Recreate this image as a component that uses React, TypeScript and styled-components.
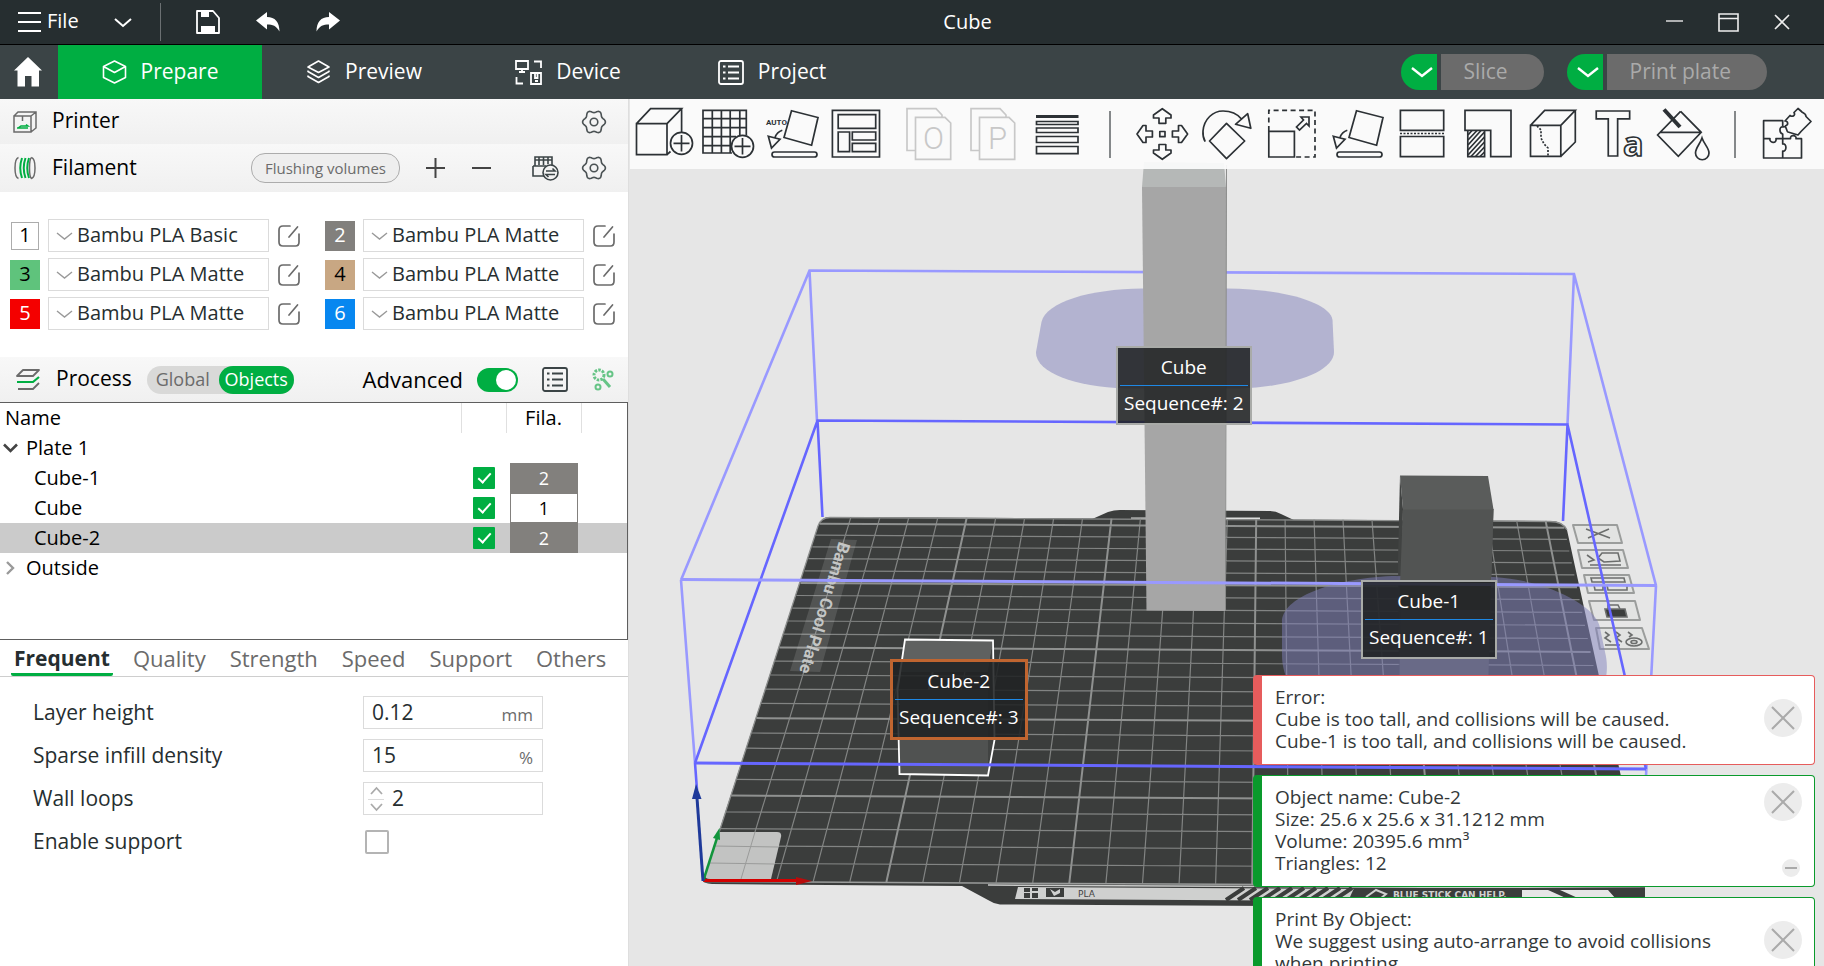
import React, { useId, useState } from 'react';
import styled, { createGlobalStyle, css } from 'styled-components';

const GlobalStyle = createGlobalStyle`
  *, *::before, *::after { box-sizing: border-box; }
  body { margin: 0; }
  body, button, input, select { font-family: "Open Sans", "Noto Sans", sans-serif; }
  button, input, select { margin: 0; padding: 0; border: 0; background: none; color: inherit; font-size: inherit; }
  svg { display: block; flex: none; overflow: visible; }
`;

const green = '#00ae42';

/* ---------- window frame ---------- */

const Window = styled.div`
  display: flex;
  flex-direction: column;
  height: 100vh;
  min-height: 720px;
  overflow: hidden;
  background: #fff;
  color: #000;
`;

const TitleBar = styled.header`
  display: flex;
  flex: none;
  align-items: center;
  height: 45px;
  border-bottom: 1px solid #000;
  background: #262e30;
  color: #fff;
  font-size: 20px;
`;

const FileButton = styled.button`
  display: flex;
  align-items: center;
  gap: 6px;
  width: 93px;
  height: 44px;
  padding-left: 18px;
  line-height: 40px;
`;

const ButtonText = styled.span`
  padding-bottom: 2px;
`;

const TitleButton = styled.button<{ $narrow?: boolean }>`
  display: flex;
  align-items: center;
  justify-content: center;
  width: ${p => (p.$narrow ? 54 : 60)}px;
  height: 44px;
`;

const TitleDivider = styled.span`
  width: 1px;
  height: 38px;
  margin: 0 17px 0 7px;
  background: #6b7072;
`;

const Title = styled.h1`
  flex: 1;
  margin: 0;
  padding: 0 70px 2px 0;
  font-size: 20px;
  font-weight: 400;
  text-align: center;
`;

const WindowControls = styled.div`
  display: flex;
  padding-right: 15px;
`;

/* ---------- main navigation ---------- */

const Nav = styled.nav`
  display: flex;
  flex: none;
  align-items: center;
  height: 54px;
  padding-right: 57px;
  background: #3b4446;
  color: #fff;
  font-size: 21px;
`;

const HomeButton = styled.button`
  display: flex;
  align-items: center;
  justify-content: center;
  width: 58px;
  height: 54px;
  padding-right: 2px;
`;

const NavTab = styled.button<{ $active?: boolean }>`
  display: flex;
  align-items: center;
  justify-content: center;
  gap: 14px;
  width: 204px;
  height: 54px;
  background: ${p => (p.$active ? green : 'transparent')};
`;

const NavSpacer = styled.div`
  flex: 1;
`;

const SplitButton = styled.div`
  display: flex;
  gap: 4px;
  margin-left: 23px;
`;

const SplitArrow = styled.button`
  display: flex;
  align-items: center;
  justify-content: center;
  width: 36px;
  height: 36px;
  padding-left: 6px;
  border-radius: 18px 0 0 18px;
  background: ${green};
`;

const SplitAction = styled.button`
  height: 36px;
  padding: 0 36px 2px 23px;
  border-radius: 0 18px 18px 0;
  background: #6b6b6b;
  color: #aaa;
  line-height: 32px;
`;

/* ---------- side panel ---------- */

const Body = styled.main`
  display: flex;
  flex: 1;
  min-height: 0;
`;

const Sidebar = styled.aside`
  display: flex;
  flex: 0 0 628px;
  flex-direction: column;
  background: #fff;
`;

const SectionBar = styled.div<{ $height: number; $end?: number }>`
  display: flex;
  flex: none;
  align-items: center;
  height: ${p => p.$height}px;
  padding: 0 ${p => p.$end ?? 22}px 0 13px;
  background: linear-gradient(#f8f8f8, #f0f0f0);
`;

const SectionTitle = styled.h2`
  flex: 1;
  margin: 0 0 0 15px;
  padding-bottom: 3px;
  font-size: 21px;
  font-weight: 400;
  line-height: 30px;
`;

const IconButton = styled.button<{ $space?: number }>`
  display: flex;
  align-items: center;
  justify-content: center;
  height: 28px;
  margin-left: ${p => p.$space ?? 0}px;
`;

const FlushButton = styled.button`
  height: 30px;
  padding: 0 13px 1px;
  border: 1px solid #acacac;
  border-radius: 14px;
  background: #eee;
  color: #6b6b6b;
  font-size: 15px;
`;

const FilamentGrid = styled.div`
  display: grid;
  flex: none;
  grid-template-columns: 1fr 1fr;
  gap: 6px 25px;
  padding: 27px 13px 27px 10px;
`;

const FilamentSlot = styled.div`
  display: flex;
  align-items: center;
  gap: 8px;
`;

const Swatch = styled.button<{ $bg: string; $fg: string; $outlined?: boolean }>`
  flex: none;
  width: 30px;
  height: 30px;
  padding-bottom: 2px;
  background: ${p => p.$bg};
  color: ${p => p.$fg};
  font-size: 20px;
  line-height: 26px;
  ${p => p.$outlined && css`box-shadow: inset 0 0 0 1px #fff, inset 0 0 0 2px #acacac;`}
`;

const Combo = styled.label`
  display: flex;
  flex: 1;
  align-items: center;
  height: 33px;
  padding-left: 7px;
  border: 1px solid #dbdbdb;
  color: #262e30;
`;

const ComboSelect = styled.select`
  flex: 1;
  min-width: 0;
  height: 31px;
  padding: 0 0 2px 4px;
  appearance: none;
  font-size: 20px;
  line-height: 29px;
`;

const ProcessTitle = styled(SectionTitle)`
  flex: none;
  margin-left: 16px;
`;

const ModeSwitch = styled.div`
  display: flex;
  height: 28px;
  margin-left: 15px;
  border-radius: 14px;
  background: #d9d9d8;
  font-size: 18px;
`;

const ModeButton = styled.button<{ $active?: boolean }>`
  width: ${p => (p.$active ? 75 : 72)}px;
  padding-bottom: 1px;
  border-radius: 14px;
  background: ${p => (p.$active ? green : 'transparent')};
  color: ${p => (p.$active ? '#fff' : '#6b6b6b')};
  line-height: 26px;
`;

const AdvancedLabel = styled.label`
  display: flex;
  align-items: center;
  gap: 14px;
  margin-left: auto;
  font-size: 22px;
  line-height: 28px;
`;

const Toggle = styled.input`
  position: relative;
  width: 41px;
  height: 24px;
  border-radius: 12px;
  background: #bbb;
  appearance: none;
  &:checked { background: ${green}; }
  &::after {
    content: '';
    position: absolute;
    top: 2px;
    right: 2px;
    width: 20px;
    height: 20px;
    border-radius: 10px;
    background: #fff;
  }
`;

/* ---------- object tree ---------- */

const TreeFrame = styled.div`
  flex: none;
  height: 238px;
  border: 1px solid #5e5e5e;
  border-left: 0;
`;

const Tree = styled.table`
  width: 100%;
  border-collapse: collapse;
  table-layout: fixed;
  font-size: 20px;
  line-height: 28px;
`;

const Col = styled.col<{ $width: number }>`
  width: ${p => p.$width}px;
`;

const HeadCell = styled.th`
  height: 30px;
  padding: 0 0 0 5px;
  font-weight: 400;
  text-align: left;
  & + & {
    padding: 0;
    border-left: 1px solid #e0e0e0;
    text-align: center;
  }
`;

const TreeRow = styled.tr<{ $selected?: boolean }>`
  height: 30px;
  background: ${p => (p.$selected ? '#cbcbcb' : 'transparent')};
`;

const TreeCell = styled.td`
  height: 30px;
  padding: 0;
`;

const NodeLabel = styled.div<{ $leaf?: boolean }>`
  display: flex;
  align-items: center;
  gap: 8px;
  padding-left: ${p => (p.$leaf ? 34 : 3)}px;
`;

const Check = styled.input`
  position: relative;
  display: block;
  width: 22px;
  height: 22px;
  margin: 0 0 0 12px;
  border-radius: 1px;
  background: ${green};
  appearance: none;
  &::after {
    content: '';
    position: absolute;
    top: 3px;
    left: 8px;
    width: 7px;
    height: 13px;
    border: solid #fff;
    border-width: 0 2px 2px 0;
    transform: rotate(42deg);
  }
`;

const FilamentCell = styled.button<{ $light?: boolean }>`
  display: block;
  width: 68px;
  height: 30px;
  margin-left: 4px;
  border: 1px solid #82807d;
  background: ${p => (p.$light ? '#fff' : '#82807d')};
  color: ${p => (p.$light ? '#000' : '#fff')};
  font-size: 18px;
  line-height: 26px;
`;

/* ---------- settings ---------- */

const SettingTabs = styled.div`
  display: flex;
  flex: none;
  gap: 16px;
  height: 37px;
  padding-left: 11px;
  border-bottom: 1px solid #cecece;
`;

const SettingTab = styled.button<{ $active?: boolean }>`
  padding: 2px ${p => (p.$active ? 3 : 4)}px 0;
  border-bottom: 3px solid ${p => (p.$active ? green : 'transparent')};
  border-radius: 2px;
  color: ${p => (p.$active ? '#262e30' : '#6b6b6b')};
  font-size: ${p => (p.$active ? 21 : 22)}px;
  font-weight: ${p => (p.$active ? 700 : 400)};
  line-height: 32px;
`;

const Form = styled.form`
  display: flex;
  flex-direction: column;
  gap: 10px;
  padding: 19px 85px 0 33px;
  color: #262e30;
  font-size: 21px;
`;

const Field = styled.div`
  display: grid;
  grid-template-columns: 1fr 180px;
  align-items: center;
  height: 33px;
`;

const FieldLabel = styled.label`
  padding-bottom: 2px;
`;

const FieldBox = styled.div`
  display: flex;
  align-items: center;
  height: 33px;
  padding: 0 9px 0 8px;
  border: 1px solid #dbdbdb;
`;

const FieldInput = styled.input`
  flex: 1;
  min-width: 0;
  height: 31px;
  padding-bottom: 2px;
  font-size: 21px;
`;

const Unit = styled.span`
  padding-top: 3px;
  color: #6b6b6b;
  font-size: 17px;
`;

const Spinner = styled.div`
  display: flex;
  flex-direction: column;
  width: 16px;
  margin: 0 8px 0 -4px;
`;

const SpinButton = styled.button`
  display: flex;
  align-items: center;
  justify-content: center;
  height: 15px;
  & + & { border-top: 1px solid #dbdbdb; }
`;

const EmptyCheck = styled.input`
  width: 24px;
  height: 24px;
  margin: 0 0 0 2px;
  border: 2px solid #b4b4b4;
  border-radius: 2px;
  appearance: none;
`;

/* ---------- viewport ---------- */

const Viewport = styled.section`
  position: relative;
  flex: 1;
  min-width: 0;
  overflow: hidden;
  border-left: 1px solid #dedede;
  background: #e6e6e6;
`;

const SceneSvg = styled.svg`
  position: absolute;
  inset: 0;
  width: 100%;
  height: 100%;
`;

const Toolbar = styled.div`
  position: relative;
  display: flex;
  align-items: center;
  height: 70px;
  margin-left: 1px;
  padding-left: 2px;
  background: rgba(252, 252, 252, 0.92);
`;

const ToolGroup = styled.div<{ $gap?: number; $space?: number }>`
  display: flex;
  gap: ${p => p.$gap ?? 0}px;
  margin-left: ${p => p.$space ?? 0}px;
`;

const ToolButton = styled.button`
  width: 64px;
  height: 64px;
  color: #2c3135;
  &:disabled { color: #c8c8c8; }
`;

const ToolDivider = styled.span`
  flex: none;
  width: 2px;
  height: 47px;
  margin: 0 19px 0 20px;
  background: #85888a;
`;

const SequenceTag = styled.div<{ $x: number; $y: number; $selected?: boolean }>`
  position: absolute;
  left: ${p => p.$x}px;
  top: ${p => p.$y}px;
  display: flex;
  flex-direction: column;
  padding: 2px;
  border: ${p => (p.$selected ? '3px solid #c06530' : '2px solid #a9aba8')};
  background: rgba(32, 34, 35, 0.88);
  color: #fff;
  font-size: 19px;
  line-height: 35px;
  text-align: center;
`;

const TagName = styled.span`
  border-bottom: 1px solid #1e88e5;
`;

const TagOrder = styled.span`
  padding: 0 4px;
`;

const ToastStack = styled.div`
  position: absolute;
  top: 576px;
  right: 9px;
  display: flex;
  flex-direction: column;
  gap: 10px;
  width: 562px;
`;

const Toast = styled.div<{ $color: string }>`
  display: flex;
  gap: 8px;
  padding: 10px 12px 12px 13px;
  border: 1px solid ${p => p.$color};
  border-left-width: 9px;
  border-radius: 4px;
  background: #fff;
  color: #333839;
  font-size: 19px;
  line-height: 22px;
`;

const ToastText = styled.p`
  flex: 1;
  margin: 0;
  white-space: pre-line;
`;

const ToastActions = styled.div<{ $spread?: boolean }>`
  display: flex;
  flex-direction: column;
  align-items: flex-end;
  justify-content: ${p => (p.$spread ? 'space-between' : 'center')};
  margin: ${p => (p.$spread ? '-3px 0 -3px' : '0 0 2px')};
`;

const RoundButton = styled.button<{ $small?: boolean }>`
  display: flex;
  align-items: center;
  justify-content: center;
  width: ${p => (p.$small ? 18 : 38)}px;
  height: ${p => (p.$small ? 18 : 38)}px;
  margin-right: ${p => (p.$small ? 2 : 0)}px;
  border-radius: 19px;
  background: #ececec;
  color: #aaa;
`;

/* ---------- icons ---------- */

type IconProps = { w: number; h: number; sw?: number; color?: string; children: React.ReactNode };

const Icon = ({ w, h, sw = 2, color = 'currentColor', children }: IconProps) => (
  <svg width={w} height={h} viewBox={`0 0 ${w} ${h}`} fill="none" stroke={color} strokeWidth={sw} aria-hidden="true">
    {children}
  </svg>
);

const Chevron = ({ w, h, sw = 2, color, up }: { w: number; h: number; sw?: number; color?: string; up?: boolean }) => (
  <Icon w={w} h={h} sw={sw} color={color}>
    <path d={up ? `M1 ${h - 1}L${w / 2} 1L${w - 1} ${h - 1}` : `M1 1L${w / 2} ${h - 1}L${w - 1} 1`} />
  </Icon>
);

/* Outline of a gear with six rounded lobes. */
const gearPath = `M${Array.from({ length: 72 }, (_, i) => {
  const a = (i * Math.PI) / 36;
  const r = 10.2 + 1.2 * Math.cos(6 * a);
  return `${(12 + r * Math.cos(a)).toFixed(2)} ${(12 + r * Math.sin(a) * 1.04).toFixed(2)}`;
}).join('L')}Z`;

const Gear = () => (
  <Icon w={24} h={24} sw={1.6} color="#4b5254">
    <path d={gearPath} strokeLinejoin="round" />
    <circle cx="12" cy="12" r="3.8" />
  </Icon>
);

const EditIcon = () => (
  <Icon w={22} h={22} sw={1.7} color="#6b6b6b">
    <path d="M12 1H5Q1 1 1 5V17Q1 21 5 21H17.5Q21 21 21 17V9M11 12L19.5 2" strokeLinecap="round" />
  </Icon>
);

const ListIcon = ({ color }: { color?: string }) => (
  <Icon w={26} h={25} sw={1.8} color={color}>
    <rect x="1" y="1" width="24" height="23" rx="2" />
    <path d="M5 6.5h2.5M10 6.5h11M5 12.5h2.5M10 12.5h11M5 18.5h2.5M10 18.5h11" />
  </Icon>
);

const Tool = ({ label, disabled, children }: { label: string; disabled?: boolean; children: React.ReactNode }) => (
  <ToolButton aria-label={label} title={label} disabled={disabled}>
    <Icon w={64} h={64} sw={1.7}>{children}</Icon>
  </ToolButton>
);

const PageLetter = ({ children }: { children: string }) => (
  <>
    <path d="M18.5 48.5H10V6.7H39L45 13V15M18.5 15.3H48L53.7 21V57.3H18.5Z" />
    <text x="36.5" y="47" textAnchor="middle" fontFamily="Roboto, sans-serif" fontWeight="300" fontSize="31" fill="currentColor" stroke="none">
      {children}
    </text>
  </>
);

const LeaningSquare = () => (
  <>
    <path d="M31.5 8.8L58 15.5L51.6 43.3L24 35.5Z" />
    <path d="M22.3 28.3Q17 30 15 35.5M8.3 34.3L20 37.3L11.5 46Z" />
    <rect x="12" y="50" width="45" height="5" rx="2.5" />
  </>
);

/* ---------- 3D scene ---------- */

type Point = [number, number];

/* Screen positions of the bed corners: front left, front right, back right, back left. */
const bed: Point[] = [[703.4, 881], [1640, 886], [1563, 521], [822, 517]];
const bedSize = 256;

/* Maps a bed position in millimetres to the screen. */
const project = (() => {
  const [p0, p1, p2, p3] = bed;
  const dx1 = p1[0] - p2[0], dx2 = p3[0] - p2[0], sx = p0[0] - p1[0] + p2[0] - p3[0];
  const dy1 = p1[1] - p2[1], dy2 = p3[1] - p2[1], sy = p0[1] - p1[1] + p2[1] - p3[1];
  const det = dx1 * dy2 - dx2 * dy1;
  const g = (sx * dy2 - dx2 * sy) / det;
  const h = (dx1 * sy - sx * dy1) / det;
  return (x: number, y: number): string => {
    const u = x / bedSize, v = y / bedSize, w = g * u + h * v + 1;
    const px = (p1[0] - p0[0] + g * p1[0]) * u + (p3[0] - p0[0] + h * p3[0]) * v + p0[0];
    const py = (p1[1] - p0[1] + g * p1[1]) * u + (p3[1] - p0[1] + h * p3[1]) * v + p0[1];
    return `${(px / w).toFixed(1)} ${(py / w).toFixed(1)}`;
  };
})();

const gridPath = (major: boolean) => {
  const parts: string[] = [];
  for (let mm = 10; mm < bedSize; mm += 10) {
    if ((mm % 50 === 0) !== major) continue;
    parts.push(`M${project(mm, 0)}L${project(mm, bedSize)}`, `M${project(0, mm)}L${project(bedSize, mm)}`);
  }
  return parts.join('');
};

const plateButtons: Point[][] = [
  [[1573, 525], [1617, 525], [1622, 543], [1578, 543]],
  [[1578, 550], [1623, 550], [1628, 568], [1582, 568]],
  [[1584, 575], [1629, 575], [1634, 593], [1588, 593]],
  [[1589, 601], [1635, 601], [1640, 620], [1594, 620]],
  [[1596, 628], [1642, 628], [1649, 649], [1600, 649]],
];

const Scene = () => (
  <SceneSvg viewBox="629 99 1195 867" preserveAspectRatio="xMinYMin slice" fill="none" aria-label="Build plate">
    {/* plate with its rear and front tabs */}
    <path d="M1090 520L1108 512Q1114 510 1120 510L1270 511Q1276 511 1281 514L1298 522Z" fill="#3b3d3c" />
    <path d="M1131 518.5H1260" stroke="#dcdddc" strokeWidth="2" />
    <path d="M703 881L818 526Q821 517 830 517L1550 521Q1563 521 1567 530L1645 886V908L1000 904.5Q994 904 988 900L962 886L712 884Q703 883 703 881Z" fill="#3b3d3c" />
    <path d="M704 879L818 526Q821 517.5 830 517.5L1550 521.5Q1563 521.5 1567 530" stroke="#8d8f8e" strokeWidth="1.3" />
    <path d={gridPath(false)} stroke="#828483" strokeWidth="1.2" />
    <path d={gridPath(true)} stroke="#8f9190" strokeWidth="2" />
    <path d="M704 881.5L1640 886.5" stroke="#9a9c9b" strokeWidth="1.5" />
    <path d="M988 885L1645 888.5" stroke="#c9cac9" strokeWidth="1.5" />

    {/* front strip */}
    <path d="M1018 887L1362 889L1350 901L1015 899Z" fill="#cfd0cf" />
    <path d="M1024 888h6v4h-6zM1032 888h6v3h-6zM1024 893h6v5h-6zM1032 893h6v5h-6zM1046 888h18v9h-18z" fill="#3b3d3c" />
    <path d="M1050 889l5 3l5-3v4l-6 3z" fill="#cfd0cf" />
    <text x="1078" y="897" fontFamily="DejaVu Sans, sans-serif" fontSize="9" fill="#444">PLA</text>
    <path d="M1226 900L1244 888M1238 900L1256 888M1250 900L1268 888M1262 900L1280 888M1274 900L1292 888M1286 900L1304 888M1298 900L1316 888M1310 900L1328 888M1322 900L1340 888M1334 900L1352 888" stroke="#3b3d3c" strokeWidth="4" />
    <path d="M1354 888H1645V908L1346 906Z" fill="#3b3d3c" />
    <path d="M1366 897L1376 890L1386 894L1380 899" stroke="#cfd0cf" strokeWidth="2" />
    <text x="1393" y="898" fontFamily="DejaVu Sans, sans-serif" fontWeight="700" fontSize="9" fill="#cfd0cf">BLUE STICK CAN HELP.</text>
    <path d="M1522 890H1548L1568 899H1522ZM1560 890H1608L1616 899H1580Z" fill="#e6e6e6" />

    {/* plate name */}
    <path d="M831 539L857 540L820 672L790 671Z" fill="#fff" fillOpacity="0.12" />
    <text transform="translate(839 541) rotate(107)" fontFamily="Roboto, sans-serif" fontWeight="700" fontSize="17" fill="#c4c6c5">Bambu Cool Plate</text>

    {/* purge area in the front corner */}
    <path d="M719 832H777Q782 832 781 837L771 879L710 879Q704 879 705 874Z" fill="#c2c3c2" />
    <path d="M714 846L778 847M709 863L774 864M755 832L741 879" stroke="#9a9b9a" />

    {/* buttons beside the plate */}
    {plateButtons.map(points => (
      <polygon key={points[0][1]} points={points.map(p => p.join(',')).join(' ')} fill="#e2e3e2" stroke="#9b9d9c" strokeWidth="2" strokeLinejoin="round" />
    ))}
    <g stroke="#6c6e6d" strokeWidth="1.6">
      <path d="M1586 529L1610 538M1609 529L1588 538" />
      <path d="M1602 553L1618 553L1620 561L1604 562L1598 558ZM1590 565H1621M1587 555L1594 560L1588 562" />
      <path d="M1591 578H1624L1625 582H1592ZM1594 585H1603V590H1595ZM1607 585H1627V590H1608Z" />
      <path d="M1608 609V605H1618L1620 609" />
      <path d="M1605 609H1625L1627 617H1607Z" fill="#3b3d3c" />
      <path d="M1605 632L1609 635L1605 638L1611 642M1616 632L1620 635L1616 638L1622 642M1628 632L1632 635L1629 637M1605 645H1620" />
      <ellipse cx="1634" cy="642" rx="8" ry="4" />
      <ellipse cx="1634" cy="642" rx="3" ry="1.5" />
    </g>

    {/* clearance zone of the tall cube */}
    <path d="M1142 288.5C1090 289 1046 302 1041.5 322L1036 352C1035 372 1075 387 1125 388.5H1240C1290 387 1334 372 1334 352L1332.5 320C1330 303 1285 289 1227 288.5Z" fill="#b3b3d0" />

    {/* rear edges of the print volume */}
    <path d="M681 580L809.5 270.5L1574 274L1656 585.5M809.5 270.5L817 421M1574 274L1567.5 424M681 580L695 763M1656 585.5L1646 776" stroke="#9999ff" strokeWidth="2.6" />
    <path d="M695 763L817.5 420.5L1567.5 424.5L1646 769M817.5 420.5L822.5 517M1567.5 424.5L1563 521M695 763L697 790" stroke="#6666ff" strokeWidth="2.6" />

    {/* tall cube */}
    <path d="M1144 162L1224 163L1226 187H1142Z" fill="#b5b8b7" />
    <path d="M1142 187H1226.5L1225 611L1146.5 610.5Z" fill="#a6a6a6" />
    <path d="M1226.5 165L1225.5 611" stroke="#8b8c8b" />

    {/* Cube-1 */}
    <path d="M1403 509H1493.5L1488 690H1399Z" fill="#525453" />
    <path d="M1400 475.5L1403 509L1399 690L1398 560Z" fill="#414342" />
    <path d="M1392 576C1330 579 1282 598 1282 622V655C1282 665 1284 672 1288 682H1605C1608 670 1607 660 1605 652L1600 628C1597 605 1545 580 1494 577Z" fill="#7f7fbb" fillOpacity="0.5" />
    <path d="M1403 509H1493.5L1490 610H1399Z" fill="#525453" />
    <path d="M1400 475.5L1488 476L1493.5 509.5H1403Z" fill="#5a5c5b" />

    {/* Cube-2, selected */}
    <path d="M900 690L994 690L988 775.5L899.5 774Z" fill="#505251" />
    <path d="M905 639.5L993 640L988 672L899 672Z" fill="#5f6160" />
    <path d="M993 640L994.5 740L988 775.5L988 672Z" fill="#414342" />
    <path d="M905 639.5L993 640.5L994.5 740L988 775.5L899.5 774L897.5 690Z" stroke="#fff" strokeWidth="1.8" />

    {/* front edges of the print volume */}
    <path d="M681 579.5L1656 585.5" stroke="#9999ff" strokeWidth="3" />
    <path d="M695 763L1646 769" stroke="#6666ff" strokeWidth="3" />

    {/* axes */}
    <path d="M703.5 880.5H800" stroke="#d40000" strokeWidth="3" />
    <path d="M796 877L812 881L796 885Z" fill="#b80c0c" />
    <path d="M703.5 880L717 838" stroke="#12953c" strokeWidth="2.5" />
    <path d="M713 838L719.5 828L720 840Z" fill="#12953c" />
    <path d="M703 881L697 798" stroke="#1f3a9a" strokeWidth="3" />
    <path d="M692 799L696 784L701.5 799Z" fill="#1f3a9a" />
  </SceneSvg>
);

/* ---------- data ---------- */

const filaments = [
  { n: 1, name: 'Bambu PLA Basic', bg: '#fff', fg: '#000', outlined: true },
  { n: 2, name: 'Bambu PLA Matte', bg: '#82807d', fg: '#fff' },
  { n: 3, name: 'Bambu PLA Matte', bg: '#5fc37c', fg: '#000' },
  { n: 4, name: 'Bambu PLA Matte', bg: '#c8a783', fg: '#000' },
  { n: 5, name: 'Bambu PLA Matte', bg: '#f40000', fg: '#fff' },
  { n: 6, name: 'Bambu PLA Matte', bg: '#0787f0', fg: '#fff' },
];

const objects = [
  { name: 'Cube-1', filament: 2 },
  { name: 'Cube', filament: 1 },
  { name: 'Cube-2', filament: 2, selected: true },
];

const settingTabs = ['Frequent', 'Quality', 'Strength', 'Speed', 'Support', 'Others'];

const CloseMark = () => (
  <Icon w={24} h={24} sw={2}><path d="M1 1L23 23M23 1L1 23" /></Icon>
);

const NumberField = ({ label, value, unit }: { label: string; value: string; unit: string }) => {
  const id = useId();
  return (
    <Field>
      <FieldLabel htmlFor={id}>{label}</FieldLabel>
      <FieldBox>
        <FieldInput id={id} defaultValue={value} />
        <Unit>{unit}</Unit>
      </FieldBox>
    </Field>
  );
};

export default function App() {
  const [tab, setTab] = useState('Frequent');
  return (
    <Window>
      <GlobalStyle />
      <TitleBar>
        <FileButton>
          <Icon w={23} h={20} sw={2}><path d="M0 1H23M0 10H23M0 19H23" /></Icon>
          <ButtonText>File</ButtonText>
        </FileButton>
        <TitleButton aria-label="More menus"><Chevron w={18} h={9} /></TitleButton>
        <TitleDivider />
        <TitleButton aria-label="Save">
          <Icon w={24} h={24} sw={1.8}>
            <path d="M1 1H17L23 8V23H1Z" strokeLinejoin="round" />
            <path d="M5 16H19V23H5ZM5 1H13V7H5Z" fill="currentColor" stroke="none" />
          </Icon>
        </TitleButton>
        <TitleButton aria-label="Undo">
          <Icon w={24} h={20}><path d="M0 8.5L11 0V5C19 5 23.5 10 23.5 19.5C20 13.5 17 12.5 11 12.5V17.5Z" fill="currentColor" stroke="none" /></Icon>
        </TitleButton>
        <TitleButton aria-label="Redo">
          <Icon w={24} h={20}><path d="M24 8.5L13 0V5C5 5 .5 10 .5 19.5C4 13.5 7 12.5 13 12.5V17.5Z" fill="currentColor" stroke="none" /></Icon>
        </TitleButton>
        <Title>Cube</Title>
        <WindowControls>
          <TitleButton $narrow aria-label="Minimize"><Icon w={17} h={4} sw={1.5} color="#ddd"><path d="M0 1H17" /></Icon></TitleButton>
          <TitleButton $narrow aria-label="Maximize"><Icon w={21} h={19} sw={1.6} color="#eee"><path d="M1 1H20V18H1ZM1 5.5H20" /></Icon></TitleButton>
          <TitleButton $narrow aria-label="Close"><Icon w={14} h={14} sw={1.6} color="#eee"><path d="M0 0L14 14M14 0L0 14" /></Icon></TitleButton>
        </WindowControls>
      </TitleBar>

      <Nav>
        <HomeButton aria-label="Home">
          <Icon w={28} h={30}><path d="M14 0L28 13.5H25V29.5H17.5V19H11V29.5H3.5V13.5H0Z" fill="currentColor" stroke="none" /></Icon>
        </HomeButton>
        <NavTab $active>
          <Icon w={25} h={24} sw={1.6}><path d="M12.5 1L23.5 6.5V17.5L12.5 23L1.5 17.5V6.5ZM1.5 6.5L12.5 12.5L23.5 6.5" strokeLinejoin="round" /></Icon>
          <ButtonText>Prepare</ButtonText>
        </NavTab>
        <NavTab>
          <Icon w={25} h={24} sw={1.6}><path d="M12.5 1L23 7L12.5 12.5L2 7ZM2 10.5V11.5L12.5 17.5L23 11.5V10.5M2 15.5V16.5L12.5 22.5L23 16.5V15.5" strokeLinejoin="round" /></Icon>
          <ButtonText>Preview</ButtonText>
        </NavTab>
        <NavTab>
          <Icon w={27} h={25} sw={1.8}><path d="M1 1H13V9H1ZM7 9V12M4 12H10M19 1.5H26V8M8 23.5H1.5V17M16 13H26V24H16ZM20 13V18H22.5V13M20 21H23" /></Icon>
          <ButtonText>Device</ButtonText>
        </NavTab>
        <NavTab><ListIcon /><ButtonText>Project</ButtonText></NavTab>
        <NavSpacer />
        <SplitButton>
          <SplitArrow aria-label="Slice options"><Chevron w={22} h={10} sw={2.4} /></SplitArrow>
          <SplitAction disabled>Slice</SplitAction>
        </SplitButton>
        <SplitButton>
          <SplitArrow aria-label="Print options"><Chevron w={22} h={10} sw={2.4} /></SplitArrow>
          <SplitAction disabled>Print plate</SplitAction>
        </SplitButton>
      </Nav>

      <Body>
        <Sidebar>
          <SectionBar $height={45}>
            <Icon w={24} h={22} sw={1.5} color="#6b6b6b">
              <path d="M1 5H18V21H1ZM1 5L5 1H23V17L18 21M18 5L23 1M9.5 5V10" />
              <path d="M5 17L8 15H15L13 13.5M4 17H15" stroke={green} />
            </Icon>
            <SectionTitle>Printer</SectionTitle>
            <IconButton aria-label="Printer settings"><Gear /></IconButton>
          </SectionBar>

          <SectionBar $height={48}>
            <Icon w={24} h={24} sw={1.5} color="#6b6b6b">
              <path d="M5.5 1.5Q2 2.500 2 12T5.5 22.5M18.5 1.5Q16.5 3 16.5 12T18.500 22.5Q22 21.500 22 12T18.5 1.500" />
              <path d="M9 2Q5.5 12 9 22M12.5 2Q9 12 12.5 22M16 2Q12.5 12 16 22" stroke={green} strokeWidth="2" />
            </Icon>
            <SectionTitle>Filament</SectionTitle>
            <FlushButton>Flushing volumes</FlushButton>
            <IconButton $space={26} aria-label="Add filament"><Icon w={19} h={20} color="#444"><path d="M9.5 0V20M0 10H19" /></Icon></IconButton>
            <IconButton $space={27} aria-label="Remove filament"><Icon w={19} h={20} color="#444"><path d="M0 10H19" /></Icon></IconButton>
            <IconButton $space={41} aria-label="Sync filaments">
              <Icon w={27} h={25} sw={1.6} color="#3b4446">
                <path d="M3 10V1H20V9M1 10H14M1 10V20H12M7 1V9M11.5 1V9M16 1V8M3 4H20" />
                <circle cx="18.5" cy="16.5" r="7.5" fill="#f3f3f3" />
                <path d="M14 15H23L20.5 12.5M23 18.5H14L16.5 21" />
              </Icon>
            </IconButton>
            <IconButton $space={23} aria-label="Filament settings"><Gear /></IconButton>
          </SectionBar>

          <FilamentGrid>
            {filaments.map(f => (
              <FilamentSlot key={f.n}>
                <Swatch $bg={f.bg} $fg={f.fg} $outlined={f.outlined}>{f.n}</Swatch>
                <Combo>
                  <Chevron w={17} h={8} sw={1.4} color="#999" />
                  <ComboSelect aria-label={`Filament ${f.n}`} defaultValue={f.name}>
                    <option>{f.name}</option>
                  </ComboSelect>
                </Combo>
                <IconButton $space={1} aria-label={`Edit filament ${f.n}`}><EditIcon /></IconButton>
              </FilamentSlot>
            ))}
          </FilamentGrid>

          <SectionBar $height={45} $end={14}>
            <Icon w={27} h={22} sw={1.8} color="#6b6b6b">
              <path d="M10 1H26L20 7H4Z" strokeLinejoin="round" />
              <path d="M4 13H20L26 8" stroke={green} strokeWidth="2.2" />
              <path d="M5 20H20L26 14" />
            </Icon>
            <ProcessTitle>Process</ProcessTitle>
            <ModeSwitch>
              <ModeButton>Global</ModeButton>
              <ModeButton $active>Objects</ModeButton>
            </ModeSwitch>
            <AdvancedLabel>
              <ButtonText>Advanced</ButtonText>
              <Toggle type="checkbox" defaultChecked />
            </AdvancedLabel>
            <IconButton $space={24} aria-label="Parameter list"><ListIcon color="#3b4446" /></IconButton>
            <IconButton $space={24} aria-label="Search settings">
              <Icon w={22} h={23} sw={2} color="#66c486">
                <circle cx="7" cy="7" r="5" strokeDasharray="2.5 1.2" strokeWidth="3" />
                <circle cx="18" cy="6" r="2.5" />
                <circle cx="6" cy="19" r="2.5" />
                <path d="M11 11L18 19" strokeWidth="3" />
              </Icon>
            </IconButton>
          </SectionBar>

          <TreeFrame>
            <Tree>
              <colgroup><col /><Col $width={45} /><Col $width={75} /><Col $width={46} /></colgroup>
              <thead>
                <tr><HeadCell>Name</HeadCell><HeadCell /><HeadCell>Fila.</HeadCell><HeadCell /></tr>
              </thead>
              <tbody>
                <TreeRow>
                  <TreeCell colSpan={4}>
                    <NodeLabel><Icon w={15} h={10} sw={2.6} color="#444"><path d="M1 1.5L7.5 8L14 1.5" /></Icon>Plate 1</NodeLabel>
                  </TreeCell>
                </TreeRow>
                {objects.map(o => (
                  <TreeRow key={o.name} $selected={o.selected}>
                    <TreeCell><NodeLabel $leaf>{o.name}</NodeLabel></TreeCell>
                    <TreeCell><Check type="checkbox" defaultChecked aria-label={`Print ${o.name}`} /></TreeCell>
                    <TreeCell><FilamentCell $light={o.filament === 1}>{o.filament}</FilamentCell></TreeCell>
                    <TreeCell />
                  </TreeRow>
                ))}
                <TreeRow>
                  <TreeCell colSpan={4}>
                    <NodeLabel><Icon w={15} h={14} sw={2.4} color="#9a9a9a"><path d="M4 1L10 7L4 13" /></Icon>Outside</NodeLabel>
                  </TreeCell>
                </TreeRow>
              </tbody>
            </Tree>
          </TreeFrame>

          <SettingTabs role="tablist">
            {settingTabs.map(t => (
              <SettingTab key={t} role="tab" aria-selected={t === tab} $active={t === tab} onClick={() => setTab(t)}>{t}</SettingTab>
            ))}
          </SettingTabs>

          <Form>
            <NumberField label="Layer height" value="0.12" unit="mm" />
            <NumberField label="Sparse infill density" value="15" unit="%" />
            <Field>
              <FieldLabel htmlFor="wall-loops">Wall loops</FieldLabel>
              <FieldBox>
                <Spinner>
                  <SpinButton type="button" aria-label="More wall loops"><Chevron w={13} h={8} sw={1.8} color="#aaa" up /></SpinButton>
                  <SpinButton type="button" aria-label="Fewer wall loops"><Chevron w={13} h={8} sw={1.8} color="#aaa" /></SpinButton>
                </Spinner>
                <FieldInput id="wall-loops" defaultValue="2" />
              </FieldBox>
            </Field>
            <Field>
              <FieldLabel htmlFor="enable-support">Enable support</FieldLabel>
              <EmptyCheck id="enable-support" type="checkbox" />
            </Field>
          </Form>
        </Sidebar>

        <Viewport>
          <Scene />
          <Toolbar>
            <ToolGroup>
              <Tool label="Add object">
                <path d="M4.5 21.7H35V52.7H4.5ZM4.5 21.7L18.6 6.7H49.6L35 21.7M49.6 6.7V30M35 52.7L38.5 49.5" />
                <circle cx="49.5" cy="41.3" r="11" />
                <path d="M49.5 33V49.5M41.5 41.3H57.5" />
              </Tool>
              <Tool label="Add plate">
                <path d="M36 51H7V8.3H50.3V33M16.3 8.3V51M25.4 8.3V51M34.2 8.3V51M43.8 8.3V33M7 16.7H50.3M7 25.7H50.3M7 34.7H40M7 43.7H35" />
                <circle cx="46.5" cy="44.3" r="11" />
                <path d="M46.5 36V52.5M38.5 44.3H54.5" />
              </Tool>
              <Tool label="Auto orient">
                <LeaningSquare />
                <text x="6" y="22.5" fontFamily="Roboto, sans-serif" fontWeight="700" fontSize="8" fill="currentColor" stroke="none">AUTO</text>
              </Tool>
              <Tool label="Arrange">
                <path d="M8.4 8.3H55.5V55H8.4ZM14.2 12.7H51.7V26.3H14.2ZM14.2 30H25.6V49.7H14.2ZM28.3 30H51.7V38H28.3ZM28.3 41.3H51.7V49.7H28.3Z" />
              </Tool>
            </ToolGroup>
            <ToolGroup $space={9}>
              <Tool label="Split to objects" disabled><PageLetter>O</PageLetter></Tool>
              <Tool label="Split to parts" disabled><PageLetter>P</PageLetter></Tool>
              <Tool label="Variable layer height">
                <path d="M11 14.5H53.5" strokeWidth="3" />
                <path d="M11.5 19.5H53V22.5H11.5ZM11.5 26H53V30.5H11.5ZM11.5 34.5H53V40.5H11.5ZM11.5 44.5H53V51.7H11.5Z" />
              </Tool>
            </ToolGroup>
            <ToolDivider />
            <ToolGroup $gap={1}>
              <Tool label="Move">
                <path d="M32.3 6.7L41 13V16H35.8V21.3H29V16H23.5V13ZM32.3 57.3L41 51V48H35.8V42.5H29V48H23.5V51ZM7 32L13 23.5H16V29H22.4V35H16V40.5H13ZM57.6 32L51.5 23.5H48.5V29H42.4V35H48.5V40.5H51.5ZM29.8 29.5H35V34.7H29.8Z" strokeLinejoin="round" />
              </Tool>
              <Tool label="Rotate">
                <path d="M31.5 21.3L49.7 39L31.5 56.7L14.5 39ZM10.2 39.7Q7.5 35 8 29C9 17 18 9 28 9Q40 9 46.5 17M40.5 22.3L52.7 11.7L55.8 26.3Z" strokeLinejoin="round" />
              </Tool>
              <Tool label="Scale">
                <path d="M8.8 29V8.3H55V55H34" strokeDasharray="5 3.5" />
                <path d="M8.8 29.3H34.4V55H8.8ZM41 15H49V24L46.5 21.5L39.5 28L36.5 25L43.5 18Z" />
              </Tool>
              <Tool label="Lay on face"><LeaningSquare /></Tool>
              <Tool label="Cut">
                <path d="M10.4 8.3H53.7V28.3H10.4ZM10.4 34.5H53.7V54.7H10.4Z" />
                <path d="M10 31.5H54" strokeDasharray="2 1.5" />
              </Tool>
              <Tool label="Support painting">
                <path d="M10 8.3H56V54.7H35.7V28.3H10ZM12.8 28.3V54.7H29.6V28.3" />
                <path d="M13 33L17 28.5M13 38L22 28.5M13 43L26 28.5M13 48L29.5 30M13 53L29.5 35M16 54.5L29.5 40M20.5 54.5L29.5 45M25 54.5L29.5 50" />
              </Tool>
              <Tool label="Seam painting">
                <path d="M10.5 23.3H40.8V54.3H10.5ZM10.5 23.3L24.7 8.3H55.3L40.8 23.3M55.3 8.3V40L40.8 54.3" />
                <path d="M17 24L21 28V36L24 42L28 46V54" strokeDasharray="2 1.5" />
              </Tool>
              <Tool label="Text shape">
                <text x="10" y="54" fontFamily="Open Sans, sans-serif" fontWeight="700" fontSize="62">
                  T<tspan dx="-8" fontSize="34" fill="#fbfbfb">a</tspan>
                </text>
              </Tool>
              <Tool label="Color painting">
                <path d="M30.6 9.3L51.2 30.3L28.3 54.3L7.6 33L30.6 9.3M10.5 30.3H51.2M52 36C50 42 45.5 46 45.5 51A6.6 6.6 0 0 0 59 51C59 46 54 42 52 36Z" />
                <path d="M14 7.5L30 25" strokeWidth="4" />
              </Tool>
            </ToolGroup>
            <ToolDivider />
            <Tool label="Assembly view">
              <path d="M27.7 24V18.7H8.6V56H46.5V36.7H41C42 33 35 32 35.5 36.7H27.7M8.6 36.7H15C14 41 22 42 21 36.7H27.7V42C32 41 32 50 27.7 49V56M27.7 36.7V32C24 31 24 24 28 25C32 23 31 29 33 30L43 33L46 29.5L56 19.5L51 14.5C51 11 47 11 46.500 9.500L43 6.5L39 10.5C41 14 37 15 35 13.5L30 19C33 19 34 23 30 24" strokeLinejoin="round" />
            </Tool>
          </Toolbar>

          <SequenceTag $x={487} $y={247}><TagName>Cube</TagName><TagOrder>Sequence#: 2</TagOrder></SequenceTag>
          <SequenceTag $x={732} $y={481}><TagName>Cube-1</TagName><TagOrder>Sequence#: 1</TagOrder></SequenceTag>
          <SequenceTag $x={261} $y={560} $selected><TagName>Cube-2</TagName><TagOrder>Sequence#: 3</TagOrder></SequenceTag>

          <ToastStack>
            <Toast $color="#e65c5c" role="alert">
              <ToastText>{'Error:\nCube is too tall, and collisions will be caused.\nCube-1 is too tall, and collisions will be caused.'}</ToastText>
              <ToastActions><RoundButton aria-label="Dismiss"><CloseMark /></RoundButton></ToastActions>
            </Toast>
            <Toast $color="#0a9a2c" role="status">
              <ToastText>{'Object name: Cube-2\nSize: 25.6 x 25.6 x 31.1212 mm\nVolume: 20395.6 mm³\nTriangles: 12'}</ToastText>
              <ToastActions $spread>
                <RoundButton aria-label="Dismiss"><CloseMark /></RoundButton>
                <RoundButton $small aria-label="Collapse"><Icon w={12} h={2}><path d="M0 1H12" /></Icon></RoundButton>
              </ToastActions>
            </Toast>
            <Toast $color="#0a9a2c" role="status">
              <ToastText>{'Print By Object:\nWe suggest using auto-arrange to avoid collisions\nwhen printing.'}</ToastText>
              <ToastActions><RoundButton aria-label="Dismiss"><CloseMark /></RoundButton></ToastActions>
            </Toast>
          </ToastStack>
        </Viewport>
      </Body>
    </Window>
  );
}
